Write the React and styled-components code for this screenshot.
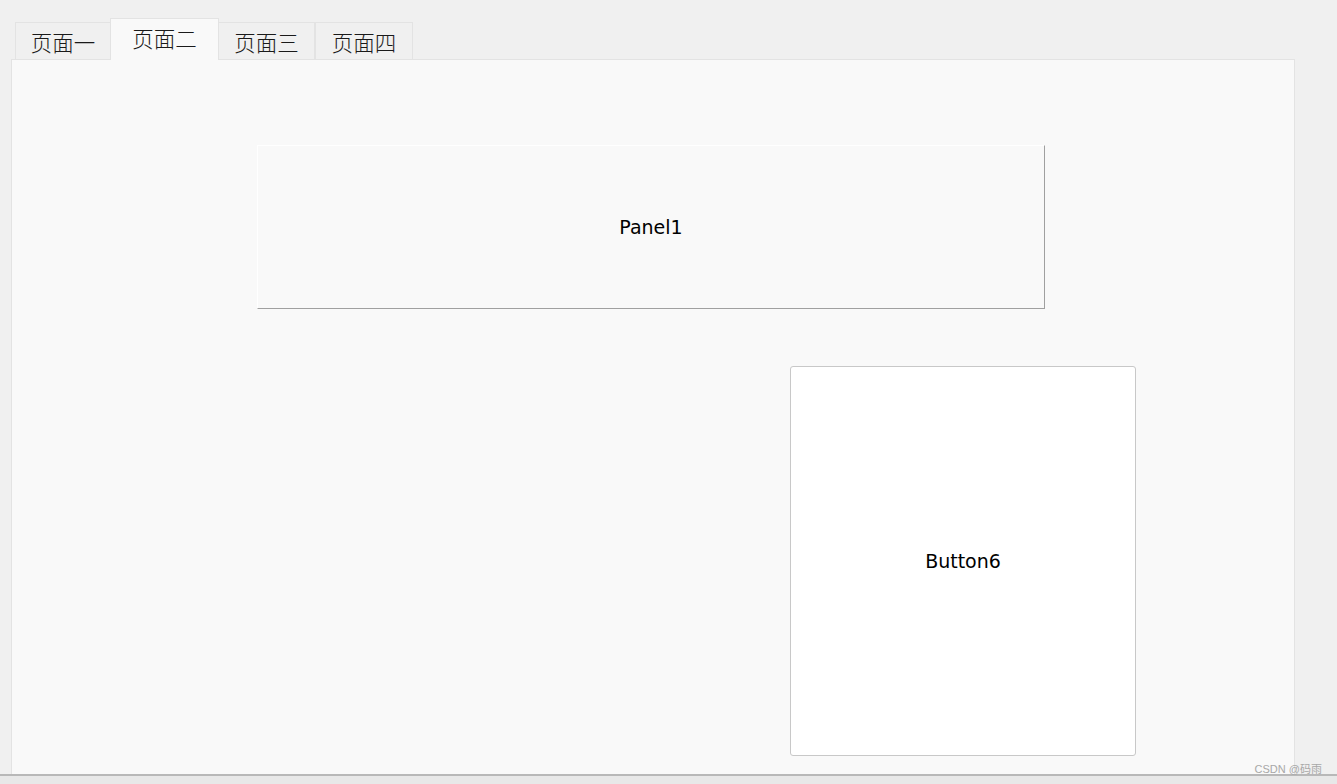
import React from 'react'
import styled, { createGlobalStyle } from 'styled-components'

const Global = createGlobalStyle`
    html, body {
        margin: 0;
        padding: 0;
        background: #f0f0f0;
    }
    #root {
        width: 1337px;
        height: 784px;
        overflow: hidden;
    }
`

const Window = styled.div`
    position: relative;
    display: flex;
    flex-direction: column;
    width: 1337px;
    height: 784px;
    background: #f0f0f0;
`

const Client = styled.div`
    flex: 1;
    display: flex;
    flex-direction: column;
    padding: 18px 0 0 11px;
    box-sizing: border-box;
`

const TabStrip = styled.div`
    display: flex;
    align-items: flex-end;
    padding-left: 4px;
    height: 42px;
    position: relative;
    z-index: 1;
    margin-bottom: -1px;
`

const Tab = styled.div`
    box-sizing: border-box;
    width: ${p => p.width}px;
    height: ${p => (p.active ? 42 : 38)}px;
    margin-left: ${p => (p.active ? -1 : 0)}px;
    margin-right: ${p => (p.active ? -1 : 0)}px;
    background: ${p => (p.active ? '#f9f9f9' : '#f0f0f0')};
    border: 1px solid #e3e3e3;
    border-bottom: ${p => (p.active ? 'none' : '1px solid #e3e3e3')};
    display: flex;
    justify-content: center;
    align-items: ${p => (p.active ? 'flex-start' : 'center')};
    padding-top: ${p => (p.active ? 7 : 1)}px;
    font-family: "Noto Sans CJK SC", sans-serif;
    font-size: 21.5px;
    font-weight: 300;
    line-height: 24px;
    color: #1a1a1a;
`

const Page = styled.div`
    flex: 1;
    width: 1284px;
    box-sizing: border-box;
    background: #f9f9f9;
    border: 1px solid #e3e3e3;
    border-bottom: none;
    display: flex;
    flex-direction: column;
`

const Panel = styled.div`
    box-sizing: border-box;
    margin: 85px 0 0 245px;
    width: 788px;
    height: 164px;
    background: #f9f9f9;
    border: 1px solid;
    border-color: #ffffff #a0a0a0 #a0a0a0 #ffffff;
    display: flex;
    align-items: center;
    justify-content: center;
    font-family: "DejaVu Sans", sans-serif;
    font-size: 19px;
    color: #000;
`

const Button = styled.div`
    box-sizing: border-box;
    margin: 57px 0 0 778px;
    width: 346px;
    height: 390px;
    background: #ffffff;
    border: 1px solid #c8c8c8;
    border-radius: 3px;
    display: flex;
    align-items: center;
    justify-content: center;
    font-family: "DejaVu Sans", sans-serif;
    font-size: 19px;
    color: #000;
`

const StatusLine = styled.div`
    height: 8px;
    border-top: 2px solid #b8b8b8;
    background: #e8e8e8;
`

const Watermark = styled.div`
    position: absolute;
    right: 15px;
    bottom: 8px;
    font-family: "Liberation Sans", "Noto Sans CJK SC", sans-serif;
    font-size: 11px;
    color: #a8a8a8;
`

const tabs = [
    { title: '页面一', width: 96 },
    { title: '页面二', width: 109, active: true },
    { title: '页面三', width: 97 },
    { title: '页面四', width: 98 }
]

export default function App() {
    return (
        <Window>
            <Global />
            <Client>
                <TabStrip>
                    {tabs.map(t => (
                        <Tab key={t.title} width={t.width} active={t.active}>
                            {t.title}
                        </Tab>
                    ))}
                </TabStrip>
                <Page>
                    <Panel>Panel1</Panel>
                    <Button>Button6</Button>
                </Page>
            </Client>
            <StatusLine />
            <Watermark>CSDN @码雨</Watermark>
        </Window>
    )
}
